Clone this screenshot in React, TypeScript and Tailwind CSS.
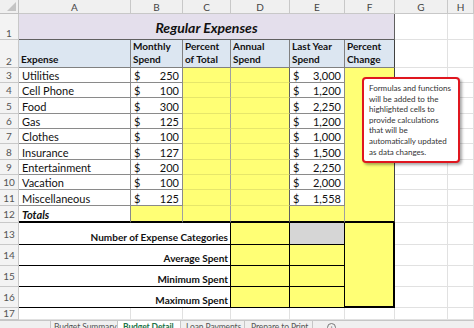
import React from "react";

const Y = "bg-[#ffff75]";
const GRID = "border-r border-b border-[#e1e1e1]";

const data: [string, string, string][] = [
  ["Utilities", "250", "3,000"],
  ["Cell Phone", "100", "1,200"],
  ["Food", "300", "2,250"],
  ["Gas", "125", "1,200"],
  ["Clothes", "100", "1,000"],
  ["Insurance", "127", "1,500"],
  ["Entertainment", "200", "2,250"],
  ["Vacation", "100", "2,000"],
  ["Miscellaneous", "125", "1,558"],
];

function RowHead({ n, end }: { n: number; end?: boolean }) {
  return (
    <div
      className={`flex ${end ? "items-end pb-[1px]" : "items-center"} justify-center bg-[#f3f3f3] border-r border-b border-[#c8c8c8] text-[10px] leading-none text-[#555]`}
    >
      {n}
    </div>
  );
}

function Money({ v, className }: { v: string; className: string }) {
  return (
    <div className={`flex items-end justify-between px-[3px] pb-[1px] text-[11px] leading-none bg-white ${className}`}>
      <span>$</span>
      <span>{v}</span>
    </div>
  );
}

function HeadCell({ l1, l2, className }: { l1?: string; l2: string; className?: string }) {
  return (
    <div
      className={`flex flex-col justify-end pl-[2px] pb-[1px] bg-[#dce6f1] border-r border-b border-[#808080] text-[10px] font-bold leading-[13px] text-[#111] ${className ?? ""}`}
    >
      {l1 && <span className="whitespace-nowrap">{l1}</span>}
      <span className="whitespace-nowrap">{l2}</span>
    </div>
  );
}

export default function App() {
  const letters = ["A", "B", "C", "D", "E", "F", "G", "H"];
  return (
    <div className="relative w-[474px] h-[328px] overflow-hidden bg-white font-['Lato',sans-serif] text-[#111]">
      <div className="grid grid-cols-[19px_112px_52px_48px_59px_55px_50px_53px_26px] grid-rows-[14px_26px_28px_15px_15px_16px_15px_15px_16px_15px_15px_16px_17px_22px_21px_21px_21px_12px]">
        {/* column header row */}
        <div className="relative bg-[#f0f0f0] border-r border-b border-[#c0c0c0]">
          <div className="absolute right-[2px] bottom-[2px] w-0 h-0 border-l-[9px] border-l-transparent border-b-[9px] border-b-[#c4c4c4]" />
        </div>
        {letters.map((l) => (
          <div
            key={l}
            className="flex items-center justify-center bg-[#f0f0f0] border-r border-b border-[#c8c8c8] text-[10px] leading-none text-[#444]"
          >
            {l}
          </div>
        ))}

        {/* row 1 */}
        <RowHead n={1} end />
        <div className="col-span-6 flex items-end justify-center pb-[4px] bg-[#e4dfec] border-r border-b border-[#606060] text-[14px] font-bold italic leading-none">
          Regular Expenses
        </div>
        <div className={GRID} />
        <div className={GRID} />

        {/* row 2 */}
        <RowHead n={2} end />
        <HeadCell l2="Expense" />
        <HeadCell l1="Monthly" l2="Spend" />
        <HeadCell l1="Percent" l2="of Total" />
        <HeadCell l1="Annual" l2="Spend" />
        <HeadCell l1="Last Year" l2="Spend" />
        <HeadCell l1="Percent" l2="Change" className="border-r-[#404040]" />
        <div className={GRID} />
        <div className={GRID} />

        {/* rows 3-11 */}
        {data.map(([name, m, ly], i) => (
          <React.Fragment key={name}>
            <RowHead n={i + 3} />
            <div className="flex items-end pl-[3px] pb-[1px] bg-white border-r border-b border-[#8a8a8a] text-[11px] leading-none whitespace-nowrap">
              {name}
            </div>
            <Money v={m} className="border-r border-b border-[#8a8a8a]" />
            <div className={`${Y} border-r border-b border-r-[#a0a0a0] border-b-[#e6e66a]`} />
            <div className={`${Y} border-r border-b border-r-[#606060] border-b-[#e6e66a]`} />
            <Money v={ly} className="border-r border-b border-[#8a8a8a]" />
            <div className={`${Y} border-r border-r-[#404040]`} />
            <div className={GRID} />
            <div className={GRID} />
          </React.Fragment>
        ))}

        {/* row 12 */}
        <RowHead n={12} />
        <div className="flex items-end pl-[3px] pb-[1px] bg-white border-r border-b-2 border-r-[#8a8a8a] border-b-black text-[11px] font-bold italic leading-none">
          Totals
        </div>
        <div className={`${Y} border-r border-b-2 border-r-[#a0a0a0] border-b-black`} />
        <div className={`${Y} border-r border-b-2 border-r-[#a0a0a0] border-b-black`} />
        <div className={`${Y} border-r border-b-2 border-r-[#606060] border-b-black`} />
        <div className={`${Y} border-r border-b-2 border-r-[#a0a0a0] border-b-black`} />
        <div className={`${Y} border-r border-b-2 border-r-[#404040] border-b-black`} />
        <div className={GRID} />
        <div className={GRID} />

        {/* rows 13-16 */}
        {["Number of Expense Categories", "Average Spent", "Minimum Spent", "Maximum Spent"].map((label, i) => (
          <React.Fragment key={label}>
            <RowHead n={13 + i} />
            <div className="col-span-3 flex items-end justify-end pr-[2px] pb-[2px] bg-white border-r border-b border-black text-[10px] font-bold leading-none whitespace-nowrap">
              {label}
            </div>
            <div className={`${Y} border-r border-b border-black`} />
            <div className={`${i === 0 ? "bg-[#d6d6d6]" : Y} border-r border-b border-black`} />
            {i === 0 && <div className={`${Y} row-span-4 border-r-2 border-b-2 border-black`} />}
            <div className={GRID} />
            <div className={GRID} />
          </React.Fragment>
        ))}

        {/* row 17 */}
        <RowHead n={17} end />
        {letters.map((l) => (
          <div key={l} className={GRID} />
        ))}
      </div>

      {/* sheet tabs */}
      <div className="flex h-[20px] bg-[#f0f0f0] border-t border-[#c6c6c6] text-[8.5px] leading-[10px] text-[#555]">
        <div className="w-[51px] border-r border-[#c6c6c6]" />
        <div className="w-[67px] pl-[3px] pt-[1px] border-r border-[#c6c6c6] whitespace-nowrap tracking-[-0.1px]">Budget Summary</div>
        <div className="w-[63px] pl-[5px] pt-[1px] bg-white border-r border-[#c6c6c6] font-bold text-[#217346] whitespace-nowrap tracking-[-0.1px]">
          Budget Detail
        </div>
        <div className="w-[64px] pl-[5px] pt-[1px] border-r border-[#c6c6c6] whitespace-nowrap tracking-[-0.1px]">Loan Payments</div>
        <div className="w-[68px] pl-[6px] pt-[1px] border-r border-[#c6c6c6] whitespace-nowrap tracking-[-0.1px]">Prepare to Print</div>
        <div className="ml-[14px] mt-[2px] w-[9px] h-[9px] rounded-full border border-[#777] flex items-center justify-center text-[8px] leading-none text-[#555]">
          +
        </div>
      </div>

      {/* callout */}
      <div className="absolute left-[362px] top-[77px] w-[98px] h-[86px] rounded-[4px] border-2 border-[#e0161f] bg-white shadow-[2px_2px_3px_rgba(0,0,0,0.35)] pl-[5px] pt-[4px] text-[8px] leading-[10.6px] text-[#333]">
        <div className="whitespace-nowrap">Formulas and functions</div>
        <div className="whitespace-nowrap">will be added to the</div>
        <div className="whitespace-nowrap">highlighted cells to</div>
        <div className="whitespace-nowrap">provide calculations</div>
        <div className="whitespace-nowrap">that will be</div>
        <div className="whitespace-nowrap">automatically updated</div>
        <div className="whitespace-nowrap">as data changes.</div>
      </div>
    </div>
  );
}
